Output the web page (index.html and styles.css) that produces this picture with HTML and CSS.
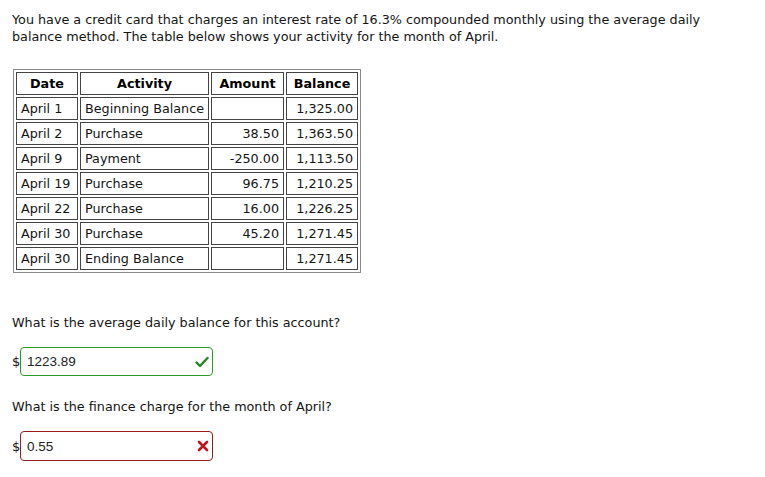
FILE: index.html
```html
<!DOCTYPE html>
<html>
<head>
<meta charset="utf-8">
<link rel="stylesheet" href="styles.css">
</head>
<body>
<div class="page">
  <p class="intro">You have a credit card that charges an interest rate of 16.3% compounded monthly using the average daily balance method. The table below shows your activity for the month of April.</p>
  <table class="activity">
    <thead>
      <tr><th class="c-date">Date</th><th class="c-act">Activity</th><th class="c-amt">Amount</th><th class="c-bal">Balance</th></tr>
    </thead>
    <tbody>
      <tr><td>April 1</td><td>Beginning Balance</td><td class="num"></td><td class="num">1,325.00</td></tr>
      <tr><td>April 2</td><td>Purchase</td><td class="num">38.50</td><td class="num">1,363.50</td></tr>
      <tr><td>April 9</td><td>Payment</td><td class="num">-250.00</td><td class="num">1,113.50</td></tr>
      <tr><td>April 19</td><td>Purchase</td><td class="num">96.75</td><td class="num">1,210.25</td></tr>
      <tr><td>April 22</td><td>Purchase</td><td class="num">16.00</td><td class="num">1,226.25</td></tr>
      <tr><td>April 30</td><td>Purchase</td><td class="num">45.20</td><td class="num">1,271.45</td></tr>
      <tr><td>April 30</td><td>Ending Balance</td><td class="num"></td><td class="num">1,271.45</td></tr>
    </tbody>
  </table>

  <p class="question q1">What is the average daily balance for this account?</p>
  <div class="answer">
    <span class="dollar">$</span>
    <div class="field correct">
      <span class="value">1223.89</span>
      <svg class="mark" width="14" height="12" viewBox="0 0 14 12"><path d="M1.5 6.5 L5 10 L12.5 2" fill="none" stroke="#1f8a1f" stroke-width="2.4" stroke-linecap="round" stroke-linejoin="round"/></svg>
    </div>
  </div>

  <p class="question q2">What is the finance charge for the month of April?</p>
  <div class="answer">
    <span class="dollar">$</span>
    <div class="field wrong">
      <span class="value">0.55</span>
      <svg class="mark" width="12" height="12" viewBox="0 0 12 12"><path d="M2 2 L10 10 M10 2 L2 10" fill="none" stroke="#c0161b" stroke-width="2.6" stroke-linecap="round"/></svg>
    </div>
  </div>
</div>
</body>
</html>
```
FILE: styles.css
```css
html, body {
  margin: 0;
  padding: 0;
  background: #ffffff;
}
.page {
  padding: 11px 12px;
  font-family: "DejaVu Sans", sans-serif;
  font-size: 12.75px;
  color: #141414;
}
.intro {
  margin: 0;
  line-height: 17px;
  width: 710px;
}
.activity {
  margin: 24px 0 0 1px;
  border: 1px solid #8a8a8a;
  border-spacing: 2px;
  font-size: 12.75px;
}
.activity th,
.activity td {
  border: 1px solid #444;
  padding: 2px 4px;
  height: 17px;
  line-height: 17px;
  white-space: nowrap;
  text-align: left;
}
.activity th {
  font-weight: bold;
  text-align: center;
  color: #000;
}
.activity td.num {
  text-align: right;
}
.c-date { width: 52px; }
.c-act { width: 119px; }
.c-amt { width: 63px; }
.c-bal { width: 62px; }
.question {
  margin: 0;
  line-height: 17px;
}
.q1 { margin-top: 41px; }
.q2 { margin-top: 22px; }
.answer {
  display: flex;
  align-items: center;
  margin-top: 16px;
}
.dollar {
  width: 8px;
  font-size: 13px;
}
.field {
  display: flex;
  align-items: center;
  justify-content: space-between;
  width: 182px;
  height: 27px;
  padding: 0 3px 0 6px;
  border-radius: 4px;
  font-family: "Liberation Sans", Arial, sans-serif;
  font-size: 13.5px;
  color: #222;
}
.field.correct { border: 1px solid #2a9a2a; }
.field.wrong { border: 1px solid #9b1c1c; height: 28px; }
.mark { display: block; }
```
